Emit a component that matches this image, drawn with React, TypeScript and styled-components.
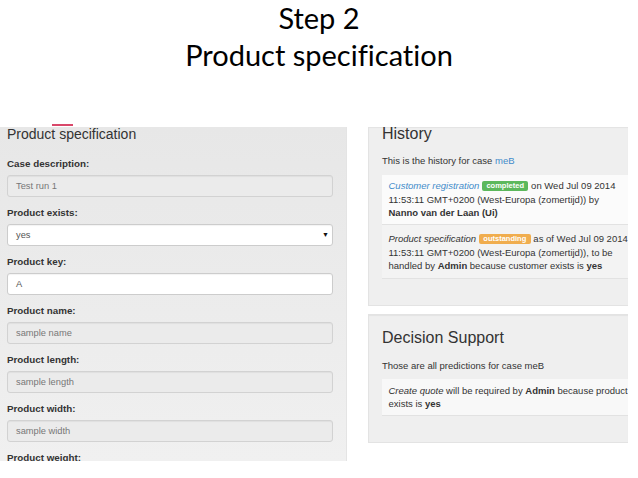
import styled, { createGlobalStyle } from "styled-components";

const GlobalStyle = createGlobalStyle`
  html, body {
    margin: 0;
    padding: 0;
    background: #ffffff;
  }
  body {
    width: 638px;
    height: 478px;
    overflow: hidden;
    font-family: "Liberation Sans", Arial, sans-serif;
    color: #333;
  }
`;

interface Field {
  label: string;
  value: string;
  kind: "disabled" | "select" | "text";
}

const fields: Field[] = [
  { label: "Case description:", value: "Test run 1", kind: "disabled" },
  { label: "Product exists:", value: "yes", kind: "select" },
  { label: "Product key:", value: "A", kind: "text" },
  { label: "Product name:", value: "sample name", kind: "disabled" },
  { label: "Product length:", value: "sample length", kind: "disabled" },
  { label: "Product width:", value: "sample width", kind: "disabled" },
];

export default function App() {
  return (
    <>
      <GlobalStyle />
      <Slide>
        <Title>
          Step 2
          <br />
          Product specification
        </Title>
        <Mark />
        <Row>
          <FormPanel>
            <FormHeading>Product specification</FormHeading>
            {fields.map((f) => (
              <FieldGroup key={f.label}>
                <Label>{f.label}</Label>
                <Control $kind={f.kind}>
                  {f.value}
                  {f.kind === "select" && <Caret>▼</Caret>}
                </Control>
              </FieldGroup>
            ))}
            <Label>Product weight:</Label>
          </FormPanel>

          <SideColumn>
            <Well $cut>
              <WellHeading $cut>History</WellHeading>
              <Intro>
                This is the history for case <Link>meB</Link>
              </Intro>
              <List>
                <Item $tone="white">
                  <Link as="i">Customer registration</Link>{" "}
                  <Badge $color="#5cb85c">completed</Badge> on Wed Jul 09 2014
                  <br />
                  11:53:11 GMT+0200 (West-Europa (zomertijd)) by
                  <br />
                  <b>Nanno van der Laan (Ui)</b>
                </Item>
                <Item $tone="grey" $roomy>
                  <i>Product specification</i>{" "}
                  <Badge $color="#f0ad4e">outstanding</Badge> as of Wed Jul 09
                  2014
                  <br />
                  11:53:11 GMT+0200 (West-Europa (zomertijd)), to be
                  <br />
                  handled by <b>Admin</b> because customer exists is <b>yes</b>
                </Item>
              </List>
            </Well>

            <Well>
              <WellHeading>Decision Support</WellHeading>
              <Intro>Those are all predictions for case meB</Intro>
              <List>
                <Item $tone="light">
                  <i>Create quote</i> will be required by <b>Admin</b> because
                  product
                  <br />
                  exists is <b>yes</b>
                </Item>
              </List>
            </Well>
          </SideColumn>
        </Row>
      </Slide>
    </>
  );
}

const Slide = styled.div`
  width: 638px;
  height: 478px;
  overflow: hidden;
`;

const Title = styled.h1`
  margin: -1px 0 0 0;
  height: 125px;
  font-family: Lato, "Open Sans", sans-serif;
  font-weight: 400;
  font-size: 29px;
  line-height: 37px;
  text-align: center;
  color: #000;
  font-variant-ligatures: none;
`;

const Mark = styled.div`
  width: 21px;
  height: 2px;
  margin-left: 52px;
  margin-bottom: 1px;
  background: #d9486a;
`;

const Row = styled.div`
  display: flex;
  align-items: flex-start;
  gap: 21px;
`;

const FormPanel = styled.div`
  width: 347px;
  height: 334px;
  padding: 0 13px 0 7px;
  box-sizing: border-box;
  overflow: hidden;
  background: linear-gradient(#e7e7e7, #f0f0f0);
  border-right: 1px solid #e4e4e4;
`;

const FormHeading = styled.h2`
  margin: 0 0 15px 0;
  font-size: 14px;
  line-height: 15px;
  font-weight: 400;
  color: #333;
`;

const FieldGroup = styled.div`
  margin-bottom: 9.5px;
`;

const Label = styled.div`
  font-size: 9.8px;
  line-height: 13.5px;
  font-weight: 700;
  color: #333;
  margin-bottom: 4px;
`;

const Control = styled.div<{ $kind: "disabled" | "select" | "text" }>`
  position: relative;
  height: 22px;
  box-sizing: border-box;
  padding: 0 8px;
  display: flex;
  align-items: center;
  font-size: 9.3px;
  color: ${(p) => (p.$kind === "disabled" ? "#777" : "#555")};
  background: ${(p) => (p.$kind === "disabled" ? "#ebebeb" : "#ffffff")};
  border: 1px solid ${(p) => (p.$kind === "disabled" ? "#d2d2d2" : "#cccccc")};
  border-radius: 3px;
  box-shadow: inset 0 1px 1px rgba(0, 0, 0, 0.05);
`;

const Caret = styled.span`
  position: absolute;
  right: 3px;
  top: 6px;
  font-size: 7px;
  color: #111;
`;

const SideColumn = styled.div`
  width: 260px;
  display: flex;
  flex-direction: column;
  gap: 8px;
  overflow-x: clip;
`;

const Well = styled.div<{ $cut?: boolean }>`
  padding: ${(p) => (p.$cut ? "0" : "13px")} 0 13px 13px;
  background: #efefef;
  border: 1px solid #e3e3e3;
  border-top: ${(p) => (p.$cut ? "none" : "1px solid #e3e3e3")};
  border-right: none;
  box-shadow: inset 0 1px 1px rgba(0, 0, 0, 0.05);
`;

const WellHeading = styled.h3<{ $cut?: boolean }>`
  margin: ${(p) => (p.$cut ? "-2px 0 11px" : "1px 0 12px")};
  font-size: 16px;
  line-height: 18px;
  font-weight: 400;
  color: #333;
`;

const Intro = styled.p`
  margin: 0 0 7px 0;
  font-size: 9.5px;
  line-height: 13.5px;
  color: #333;
`;

const Link = styled.a`
  color: #428bca;
  text-decoration: none;
`;

const List = styled.div`
  margin-bottom: 13px;
`;

const Item = styled.div<{ $tone: "white" | "grey" | "light"; $roomy?: boolean }>`
  padding: ${(p) => (p.$roomy ? "7px" : "4.5px")} 0 ${(p) => (p.$roomy ? "5px" : "4.5px")} 6.5px;
  font-size: 9.5px;
  line-height: 13.5px;
  color: #333;
  white-space: nowrap;
  background: ${(p) =>
    p.$tone === "white" ? "#fbfbfb" : p.$tone === "grey" ? "#f3f3f3" : "#f8f8f8"};
  border-bottom: 1px solid #e2e2e2;
`;

const Badge = styled.span<{ $color: string }>`
  display: inline-block;
  padding: 0 4.5px;
  line-height: 10px;
  font-size: 7.5px;
  font-weight: 700;
  color: #fff;
  background: ${(p) => p.$color};
  border-radius: 2px;
  vertical-align: 1px;
`;
